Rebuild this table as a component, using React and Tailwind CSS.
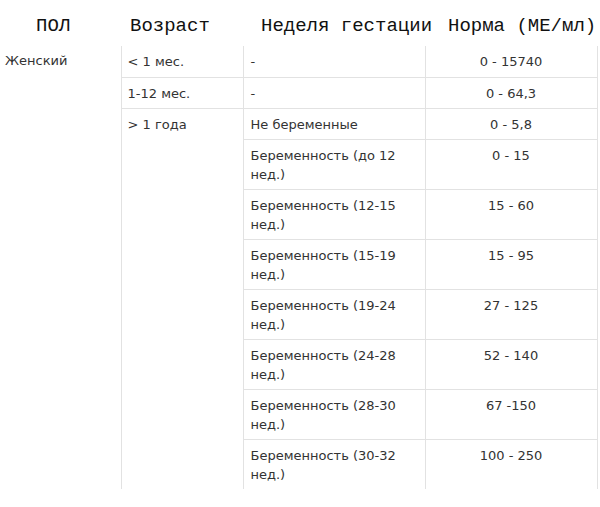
import React from "react";

const mono = { fontFamily: '"Liberation Mono", "DejaVu Sans Mono", monospace' };

const rows = [
  { age: "< 1 мес.", week: "-", norm: "0 - 15740" },
  { age: "1-12 мес.", week: "-", norm: "0 - 64,3" },
  { age: "> 1 года", week: "Не беременные", norm: "0 - 5,8" },
  { week: "Беременность (до 12 нед.)", norm: "0 - 15" },
  { week: "Беременность (12-15 нед.)", norm: "15 - 60" },
  { week: "Беременность (15-19 нед.)", norm: "15 - 95" },
  { week: "Беременность (19-24 нед.)", norm: "27 - 125" },
  { week: "Беременность (24-28 нед.)", norm: "52 - 140" },
  { week: "Беременность (28-30 нед.)", norm: "67 -150" },
  { week: "Беременность (30-32 нед.)", norm: "100 - 250" },
];

export default function App() {
  return (
    <div className="w-[600px] h-[507px] bg-white overflow-hidden">
      <div className="flex h-[46px] items-center text-[19px] text-[#111] pt-[6px]" style={mono}>
        <div className="w-[121px] pl-[36px]">ПОЛ</div>
        <div className="w-[122px] pl-[9px]">Возраст</div>
        <div className="w-[182px] pl-[18px] whitespace-nowrap">Неделя гестации</div>
        <div className="w-[172px] pl-[23px] whitespace-nowrap">Норма (МЕ/мл)</div>
      </div>
      <table
        className="border-collapse table-fixed w-[597px] text-[13px] leading-[19px] text-[#333]"
        style={{ fontFamily: '"DejaVu Sans", "Noto Sans", sans-serif' }}
      >
        <colgroup>
          <col className="w-[121px]" />
          <col className="w-[122px]" />
          <col className="w-[182px]" />
          <col className="w-[172px]" />
        </colgroup>
        <tbody>
          {rows.map((r, i) => {
            const last = i === rows.length - 1;
            const tall = i >= 3;
            return (
              <tr key={i} className={tall ? "h-[50px]" : "h-[31px]"}>
                {i === 0 && (
                  <td rowSpan={10} className="align-top pl-[5px] pt-[5px]">
                    Женский
                  </td>
                )}
                {i < 3 && (
                  <td
                    rowSpan={i === 2 ? 8 : 1}
                    className={
                      "align-top pl-[6px] pt-[6px] border-l border-r border-[#e2e2e2] " +
                      (i < 2 ? "border-b" : "")
                    }
                  >
                    {r.age}
                  </td>
                )}
                <td
                  className={
                    "align-top pl-[7px] pr-[4px] pt-[6px] border-r border-[#e2e2e2] " +
                    (last ? "" : "border-b")
                  }
                >
                  {r.week}
                </td>
                <td
                  className={
                    "align-top text-center pt-[6px] border-r border-[#e2e2e2] " +
                    (last ? "" : "border-b")
                  }
                >
                  {r.norm}
                </td>
              </tr>
            );
          })}
        </tbody>
      </table>
    </div>
  );
}
